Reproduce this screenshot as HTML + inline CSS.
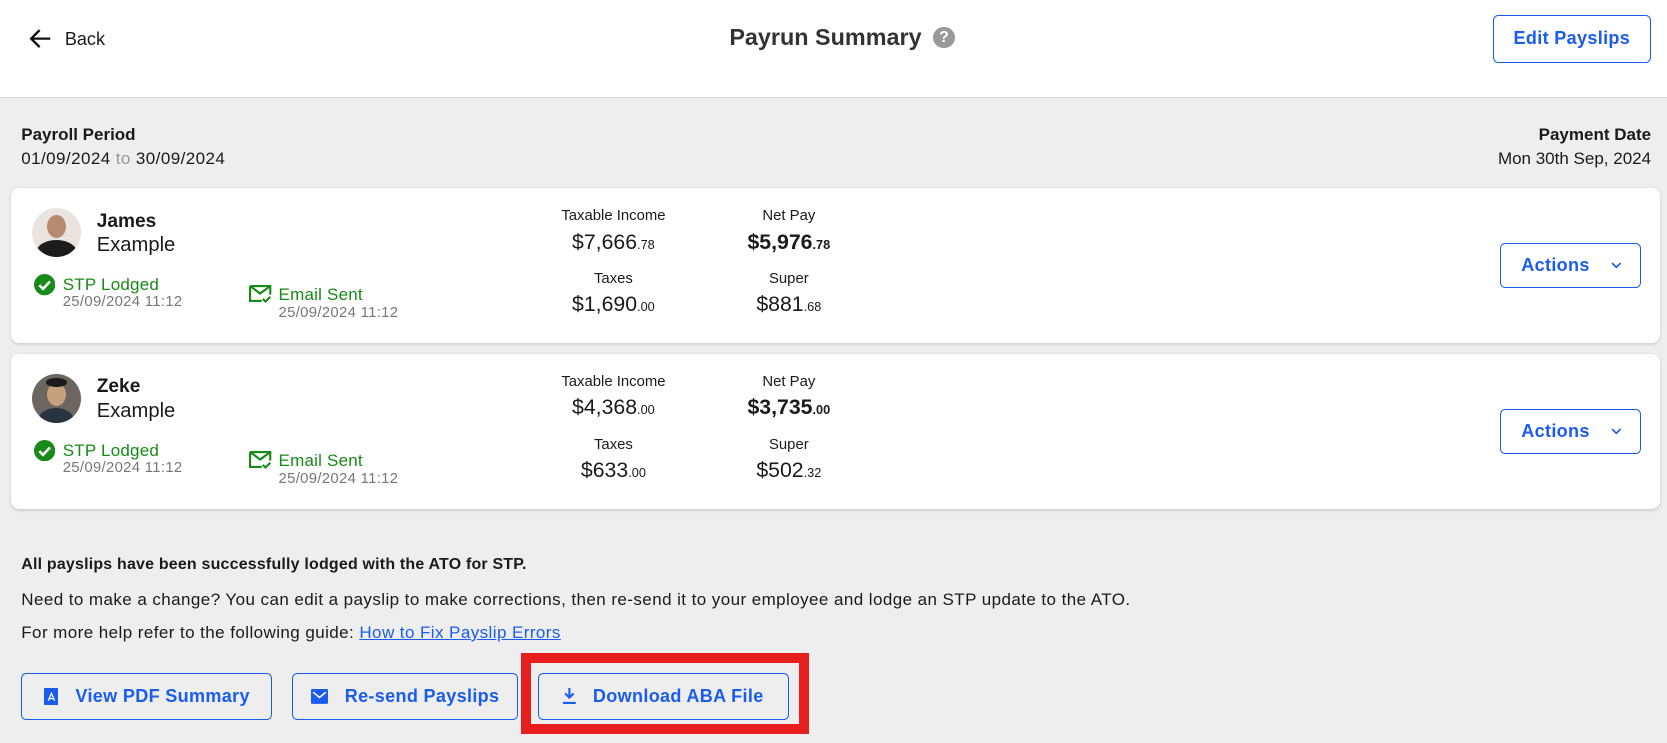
<!DOCTYPE html>
<html><head><meta charset="utf-8"><style>
html,body{margin:0;padding:0;background:#eeeeee;overflow:hidden}
body{width:1568px;height:699px;zoom:1.06314;font-family:"Liberation Sans",sans-serif;color:#1a1a1a;position:relative}
.a{position:absolute;white-space:nowrap}
.hdr{position:absolute;left:0;top:0;width:1568px;height:91px;background:#fff;border-bottom:1px solid #d8d8d8}
.btn{position:absolute;border:1px solid #1a5cf0;border-radius:5px;color:#1a5cf0;font-weight:bold;font-size:17px;display:flex;align-items:center;justify-content:center;background:transparent;letter-spacing:.3px;box-sizing:border-box}
.card{position:absolute;left:10px;width:1551px;height:146px;background:#fff;border-radius:8px;box-shadow:0 1px 3px rgba(0,0,0,.15)}
.g{color:#178a17;font-size:16px;letter-spacing:.2px}
.d{color:#777;font-size:14px;letter-spacing:.3px}
.lbl{font-size:14px;text-align:center;width:160px}
.val{font-size:20px;text-align:center;width:160px}
.val small{font-size:12px}
.av{position:absolute;width:46px;height:46px;border-radius:50%;overflow:hidden;background:#ddd}
.ls{letter-spacing:.4px}
</style></head><body>
<div class="hdr"></div>
<svg class="a" style="left:27px;top:26px" width="22" height="20" viewBox="0 0 22 20"><path d="M10 2 L2 10 L10 18 M2 10 H20" stroke="#111" stroke-width="2.2" fill="none"/></svg>
<div class="a" style="left:61px;top:27px;font-size:17px">Back</div>
<div class="a" style="left:686px;top:23px;font-size:22px;font-weight:bold;color:#333">Payrun Summary</div>
<div class="a" style="left:878px;top:25px;width:20px;height:20px;border-radius:50%;background:#999;color:#fff;font-size:15px;font-weight:bold;text-align:center;line-height:20px">?</div>
<div class="btn" style="left:1404px;top:14px;width:149px;height:45px">Edit Payslips</div>

<div class="a ls" style="left:20px;top:118px;font-size:16px;font-weight:bold;letter-spacing:0">Payroll Period</div>
<div class="a ls" style="left:20px;top:140px;font-size:16px">01/09/2024 <span style="color:#999">to</span> 30/09/2024</div>
<div class="a" style="right:15px;top:118px;font-size:16px;font-weight:bold">Payment Date</div>
<div class="a" style="right:15px;top:140px;font-size:16px">Mon 30th Sep, 2024</div>

<div class="card" style="top:177px"></div>
<div class="card" style="top:333px"></div>

<!-- card 1 -->
<div class="av" style="left:30px;top:196px;background:#e9e4e0"><div style="position:absolute;left:14px;top:6px;width:18px;height:22px;border-radius:50%;background:#b88a70"></div><div style="position:absolute;left:4px;top:30px;width:38px;height:24px;border-radius:50%;background:#1c1c1c"></div></div>
<div class="a" style="left:91px;top:198px;font-size:18px;font-weight:bold">James</div>
<div class="a" style="left:91px;top:220px;font-size:19px">Example</div>
<svg class="a" style="left:32px;top:258px" width="20" height="20"><circle cx="10" cy="10" r="10" fill="#178a17"/><path d="M5 10.5 L8.5 14 L15 7" stroke="#fff" stroke-width="2.4" fill="none"/></svg>
<div class="a g" style="left:59px;top:259px">STP Lodged</div>
<div class="a d" style="left:59px;top:277px">25/09/2024 11:12</div>
<svg class="a" style="left:234px;top:268px" width="22" height="18"><path d="M1 1 H20 V9 M1 1 V15 H12 M1 1 L10.5 8 L20 1" stroke="#178a17" stroke-width="2" fill="none"/><path d="M13 13 L15.5 15.5 L20 11" stroke="#178a17" stroke-width="2" fill="none"/></svg>
<div class="a g" style="left:262px;top:268px">Email Sent</div>
<div class="a d" style="left:262px;top:287px">25/09/2024 11:12</div>
<div class="a lbl" style="left:497px;top:196px">Taxable Income</div>
<div class="a val" style="left:497px;top:216px">$7,666<small>.78</small></div>
<div class="a lbl" style="left:662px;top:196px">Net Pay</div>
<div class="a val" style="left:662px;top:216px;font-weight:bold">$5,976<small>.78</small></div>
<div class="a lbl" style="left:497px;top:255px">Taxes</div>
<div class="a val" style="left:497px;top:275px">$1,690<small>.00</small></div>
<div class="a lbl" style="left:662px;top:255px">Super</div>
<div class="a val" style="left:662px;top:275px">$881<small>.68</small></div>
<div class="btn" style="left:1411px;top:229px;width:133px;height:42px;justify-content:flex-start;padding-left:19px">Actions<svg style="margin-left:20px" width="10" height="7"><path d="M1 1 L5 5 L9 1" stroke="#1a5cf0" stroke-width="1.6" fill="none"/></svg></div>

<!-- card 2 -->
<div class="av" style="left:30px;top:352px;background:#6b6660"><div style="position:absolute;left:14px;top:8px;width:18px;height:22px;border-radius:50%;background:#c9a07e"></div><div style="position:absolute;left:13px;top:4px;width:20px;height:8px;border-radius:50%;background:#1a1a1a"></div><div style="position:absolute;left:6px;top:32px;width:34px;height:24px;border-radius:50%;background:#2a3340"></div></div>
<div class="a" style="left:91px;top:354px;font-size:18px;font-weight:bold">Zeke</div>
<div class="a" style="left:91px;top:376px;font-size:19px">Example</div>
<svg class="a" style="left:32px;top:414px" width="20" height="20"><circle cx="10" cy="10" r="10" fill="#178a17"/><path d="M5 10.5 L8.5 14 L15 7" stroke="#fff" stroke-width="2.4" fill="none"/></svg>
<div class="a g" style="left:59px;top:415px">STP Lodged</div>
<div class="a d" style="left:59px;top:433px">25/09/2024 11:12</div>
<svg class="a" style="left:234px;top:424px" width="22" height="18"><path d="M1 1 H20 V9 M1 1 V15 H12 M1 1 L10.5 8 L20 1" stroke="#178a17" stroke-width="2" fill="none"/><path d="M13 13 L15.5 15.5 L20 11" stroke="#178a17" stroke-width="2" fill="none"/></svg>
<div class="a g" style="left:262px;top:424px">Email Sent</div>
<div class="a d" style="left:262px;top:443px">25/09/2024 11:12</div>
<div class="a lbl" style="left:497px;top:352px">Taxable Income</div>
<div class="a val" style="left:497px;top:372px">$4,368<small>.00</small></div>
<div class="a lbl" style="left:662px;top:352px">Net Pay</div>
<div class="a val" style="left:662px;top:372px;font-weight:bold">$3,735<small>.00</small></div>
<div class="a lbl" style="left:497px;top:411px">Taxes</div>
<div class="a val" style="left:497px;top:431px">$633<small>.00</small></div>
<div class="a lbl" style="left:662px;top:411px">Super</div>
<div class="a val" style="left:662px;top:431px">$502<small>.32</small></div>
<div class="btn" style="left:1411px;top:385px;width:133px;height:42px;justify-content:flex-start;padding-left:19px">Actions<svg style="margin-left:20px" width="10" height="7"><path d="M1 1 L5 5 L9 1" stroke="#1a5cf0" stroke-width="1.6" fill="none"/></svg></div>

<div class="a" style="left:20px;top:523px;font-size:15px;font-weight:bold;letter-spacing:.2px">All payslips have been successfully lodged with the ATO for STP.</div>
<div class="a ls" style="left:20px;top:555px;font-size:16px">Need to make a change? You can edit a payslip to make corrections, then re-send it to your employee and lodge an STP update to the ATO.</div>
<div class="a ls" style="left:20px;top:586px;font-size:16px">For more help refer to the following guide: <span style="color:#1a5cf0;text-decoration:underline">How to Fix Payslip Errors</span></div>

<div class="a" style="left:490px;top:614px;width:252px;height:58px;border:10px solid #e61e1e"></div>
<div class="btn" style="left:20px;top:633px;width:236px;height:44px"><svg width="14" height="16" style="margin-right:16px"><rect width="14" height="16" rx="1" fill="#1a5cf0"/><path d="M4 12 L7 5 L10 12 M5 10 H10" stroke="#fff" stroke-width="1.2" fill="none"/></svg>View PDF Summary</div>
<div class="btn" style="left:275px;top:633px;width:212px;height:44px"><svg width="16" height="14" style="margin-right:16px"><rect width="16" height="14" rx="1" fill="#1a5cf0"/><path d="M2 3 L8 8 L14 3" stroke="#fff" stroke-width="1.5" fill="none"/></svg>Re-send Payslips</div>
<div class="btn" style="left:506px;top:633px;width:236px;height:44px;background:#eeeeee"><svg width="12" height="15" style="margin-right:16px"><path d="M6 0 V9 M2 5 L6 9 L10 5 M0 14 H12" stroke="#1a5cf0" stroke-width="2" fill="none"/></svg>Download ABA File</div>
</body></html>
